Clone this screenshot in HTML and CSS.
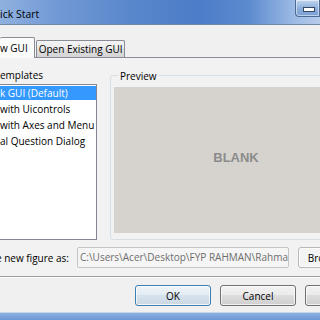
FILE: index.html
```html
<!DOCTYPE html>
<html>
<head>
<meta charset="utf-8">
<link rel="stylesheet" href="styles.css">
</head>
<body>
<div class="window">
  <div class="titlebar">
    <span class="title">ick Start</span>
    <div class="minbtn"><span class="dash"></span></div>
  </div>
  <div class="client">
    <div class="tabs">
      <div class="tab active">w GUI</div>
      <div class="tab">Open Existing GUI</div>
    </div>
    <div class="panel">
      <div class="main-row">
        <div class="templates">
          <div class="label">emplates</div>
          <div class="listbox">
            <div class="item selected">k GUI (Default)</div>
            <div class="item">with Uicontrols</div>
            <div class="item">with Axes and Menu</div>
            <div class="item">al Question Dialog</div>
          </div>
        </div>
        <div class="groupbox">
          <div class="gb-label">Preview</div>
          <div class="preview"><span class="blank">BLANK</span></div>
        </div>
      </div>
      <div class="save-row">
        <div class="save-label"><span>e new figure as:</span></div>
        <div class="field">C:\Users\Acer\Desktop\FYP RAHMAN\Rahman</div>
        <div class="btn browse">Browse...</div>
      </div>
    </div>
    <div class="buttons">
      <div class="btn default">OK</div>
      <div class="btn">Cancel</div>
      <div class="btn"></div>
    </div>
  </div>
  <div class="bottom-frame"></div>
</div>
</body>
</html>
```
FILE: styles.css
```css
html, body {
  margin: 0;
  padding: 0;
}
body {
  width: 320px;
  height: 320px;
  overflow: hidden;
  background: #f0f0f0;
  font-family: "Open Sans", "Noto Sans", sans-serif;
  font-size: 10px;
  color: #000;
}
.window {
  width: 320px;
  height: 320px;
  display: flex;
  flex-direction: column;
  overflow: hidden;
}
.titlebar {
  height: 24px;
  flex: none;
  display: flex;
  align-items: flex-start;
  justify-content: space-between;
  border-bottom: 1px solid #6f87a8;
  background: linear-gradient(to right, #8fb1df 0%, #7299d5 18%, #5a88cc 40%, #4c7cc8 62%, #5d8bcf 78%, #9dbbe5 92%, #b6cceb 100%);
}
.title {
  font-size: 10.5px;
  line-height: 14px;
  margin-top: 7px;
  color: #000;
}
.minbtn {
  width: 25px;
  height: 17px;
  box-sizing: border-box;
  border: 1px solid #4d6c95;
  border-top: none;
  border-radius: 0 0 0 4px;
  background: linear-gradient(#c3d6ef, #8fb0dd 50%, #7aa0d6);
  display: flex;
  align-items: center;
  padding-left: 7px;
  box-shadow: inset 0 0 0 1px rgba(255,255,255,0.5);
}
.dash {
  width: 10px;
  height: 3px;
  background: #fff;
  border: 1px solid #34485f;
  margin-top: 3px;
}
.client {
  flex: 1;
  display: flex;
  flex-direction: column;
}
.tabs {
  margin-top: 12px;
  height: 20px;
  display: flex;
  align-items: flex-end;
  gap: 1px;
}
.tab {
  height: 17px;
  box-sizing: border-box;
  border: 1px solid #898c95;
  border-bottom: none;
  border-radius: 2px 2px 0 0;
  padding: 0 1px 0 2px;
  line-height: 16px;
  background: linear-gradient(#f3f3f3, #ebebeb 45%, #dedede 50%, #d4d4d4);
  white-space: nowrap;
}
.tab.active {
  height: 21px;
  margin-bottom: -1px;
  border-left: none;
  padding: 0 6px 0 0;
  line-height: 20px;
  background: #fbfbfb;
  position: relative;
  z-index: 1;
}
.panel {
  border-top: 1px solid #898c95;
  border-bottom: 1px solid #a0a0a0;
  box-shadow: 0 1px 0 #fff;
  background: #f2f2f2;
  padding-bottom: 8px;
}
.main-row {
  display: flex;
  gap: 13px;
  margin-right: -42px;
}
.templates {
  width: 97px;
  flex: none;
}
.label {
  margin-top: 10px;
  line-height: 14px;
  white-space: nowrap;
}
.listbox {
  margin-top: 2px;
  height: 156px;
  box-sizing: border-box;
  background: #fff;
  border: 1px solid #828790;
  border-left: none;
  padding-top: 1px;
}
.item {
  line-height: 14px;
  height: 14px;
  margin-bottom: 2px;
  white-space: nowrap;
  overflow: hidden;
}
.item.selected {
  background: #3399ff;
  color: #fff;
}
.groupbox {
  flex: 1;
  margin-top: 17px;
  border: 1px solid #d5dfe5;
  border-radius: 3px;
  padding: 0 3px 3px 3px;
}
.gb-label {
  width: max-content;
  margin: -7px 0 0 4px;
  padding: 0 2px;
  line-height: 14px;
  background: #f2f2f2;
}
.preview {
  margin-top: 4px;
  height: 146px;
  background: #d6d3ce;
  display: flex;
  align-items: center;
  justify-content: center;
}
.blank {
  font-family: "Liberation Sans", Arial, sans-serif;
  font-weight: bold;
  font-size: 13px;
  color: #8b8b8b;
  margin-top: -6px;
}
.save-row {
  margin-top: 7px;
  height: 21px;
  display: flex;
  align-items: center;
}
.save-label {
  width: 77px;
  flex: none;
  box-sizing: border-box;
  padding-right: 8px;
  display: flex;
  justify-content: flex-end;
  white-space: nowrap;
  overflow: hidden;
}
.field {
  width: 212px;
  height: 21px;
  flex: none;
  box-sizing: border-box;
  border: 1px solid #c5c5c5;
  border-radius: 2px;
  background: #f5f5f5;
  color: #6d6d6d;
  padding-left: 2px;
  line-height: 19px;
  white-space: nowrap;
  overflow: hidden;
}
.btn {
  height: 21px;
  box-sizing: border-box;
  border: 1px solid #707070;
  border-radius: 3px;
  background: linear-gradient(#f2f2f2, #ebebeb 45%, #dddddd 50%, #cfcfcf);
  box-shadow: inset 0 0 0 1px rgba(255,255,255,0.7);
  display: flex;
  align-items: center;
  justify-content: center;
  white-space: nowrap;
  flex: none;
  width: 76px;
}
.btn.browse {
  margin-left: 9px;
  width: 62px;
  border-color: #b9b9b9;
  background: #f4f4f4;
}
.btn.default {
  border-color: #3c7fb1;
  background: linear-gradient(#eef4f9, #e4ecf3 45%, #d6e2ec 50%, #cbd8e4);
}
.buttons {
  margin-top: 8px;
  padding-left: 135px;
  display: flex;
  gap: 9px;
}
.bottom-frame {
  height: 7px;
  flex: none;
  border-top: 1px solid #c7d6ea;
  background: linear-gradient(#8db1e2, #6c98d6);
}
```
